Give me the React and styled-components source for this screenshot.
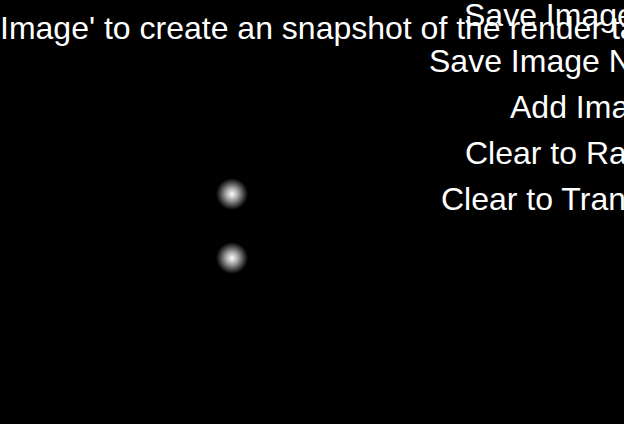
import React from "react";
import styled, { createGlobalStyle } from "styled-components";

const GlobalStyle = createGlobalStyle`
  html, body {
    margin: 0;
    padding: 0;
    background: #000;
  }
  body {
    font-family: "Liberation Sans", Arial, sans-serif;
    overflow: hidden;
  }
`;

// the render area, with the overlay text on top of it
const Page = styled.div`
  position: relative;
  width: 624px;
  height: 424px;
  background: #000;
  color: #fff;
  overflow: hidden;
`;

const Canvas = styled.div`
  position: absolute;
  inset: 0;
`;

// a soft glowing point drawn on the canvas
const Dot = styled.div`
  position: absolute;
  width: 32px;
  height: 32px;
  margin: -16px 0 0 -16px;
  border-radius: 50%;
  background: radial-gradient(
    circle closest-side,
    #ffffff 0%,
    #dcdcdc 15%,
    #a0a0a0 40%,
    #5a5a5a 65%,
    #1c1c1c 88%,
    #000 100%
  );
`;

const Caption = styled.div`
  position: relative;
  padding-top: 12px;
  font-size: 32px;
  line-height: 32px;
  white-space: nowrap;
`;

const Menu = styled.div`
  position: absolute;
  top: -1px;
  left: 428px;
  display: flex;
  flex-direction: column;
  gap: 14px;
`;

const MenuButton = styled.button`
  display: block;
  margin: 0 0 0 ${(p) => p.$indent}px;
  padding: 0;
  border: none;
  background: transparent;
  color: #fff;
  font-family: "Liberation Sans", Arial, sans-serif;
  font-size: 32px;
  line-height: 32px;
  white-space: nowrap;
  text-align: left;
  cursor: pointer;
`;

const dots = [
  { x: 232, y: 194 },
  { x: 232, y: 258 },
];

const buttons = [
  { label: "Save Image", indent: 36 },
  { label: "Save Image Now", indent: 1 },
  { label: "Add Image", indent: 82 },
  { label: "Clear to Random", indent: 37 },
  { label: "Clear to Transparent", indent: 13 },
];

const App = () => {
  return (
    <>
      <GlobalStyle />
      <Page>
        <Canvas>
          {dots.map((d, i) => (
            <Dot key={i} style={{ left: d.x, top: d.y }} />
          ))}
        </Canvas>
        <Caption>Image' to create an snapshot of the render target</Caption>
        <Menu>
          {buttons.map((b) => (
            <MenuButton key={b.label} $indent={b.indent}>
              {b.label}
            </MenuButton>
          ))}
        </Menu>
      </Page>
    </>
  );
};

export default App;
